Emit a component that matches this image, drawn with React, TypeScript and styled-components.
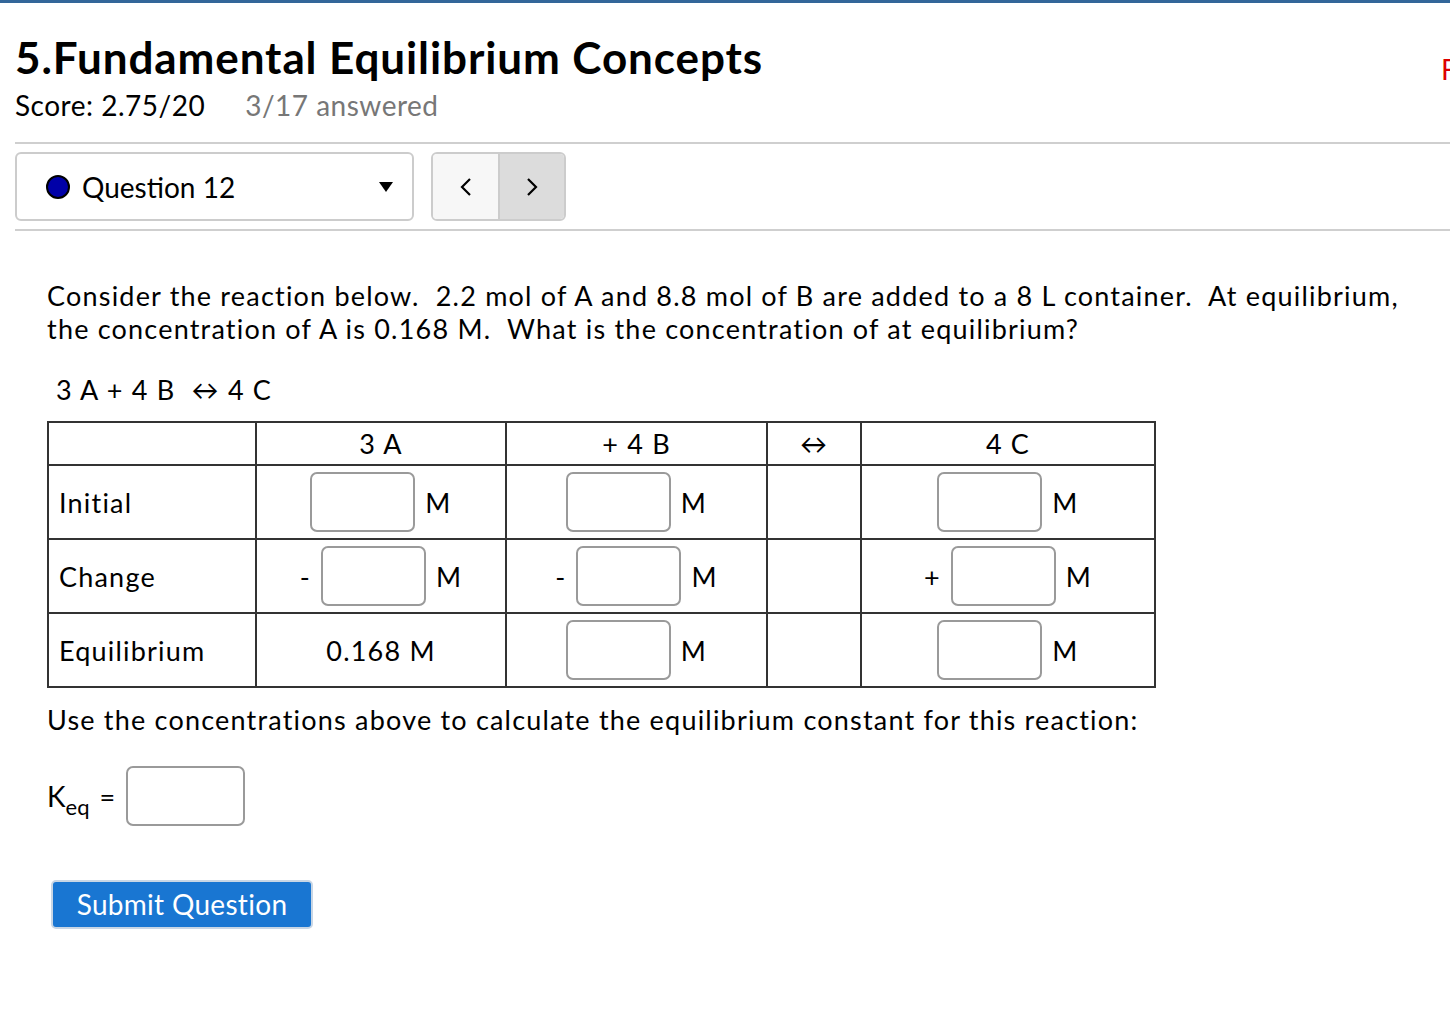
import styled, { createGlobalStyle } from 'styled-components'

const GlobalStyle = createGlobalStyle`
  html, body {
    margin: 0;
    padding: 0;
    background: #fff;
    overflow-x: hidden;
  }
  body {
    font-family: Lato, "Open Sans", "DejaVu Sans", sans-serif;
    color: #000;
  }
`

const Page = styled.div`
  border-top: 3px solid #336699;
  padding: 0 0 80px 15px;
`

const Header = styled.header`
  display: grid;
  grid-template-columns: 1426px max-content;
  padding-top: 28px;
`

const Title = styled.h1`
  margin: 0;
  font-size: 44px;
  font-weight: 700;
  line-height: 52px;
  letter-spacing: 0.9px;
`

const ScoreLine = styled.div`
  display: flex;
  gap: 40px;
  font-size: 28px;
  line-height: 36px;
  margin-top: 4px;
  letter-spacing: 0.5px;
`

const Muted = styled.span`
  color: #777;
`

const SideNote = styled.div`
  color: #dd0000;
  font-size: 28px;
  line-height: 36px;
  margin-top: 20px;
  white-space: nowrap;
`

const Rule = styled.hr<{ $top?: number }>`
  border: 0;
  border-top: 2px solid #cfcfcf;
  margin: ${p => p.$top ?? 0}px 0 0;
`

const NavBar = styled.div`
  display: flex;
  gap: 17px;
  padding: 8px 0 8px;
`

const Select = styled.div`
  width: 399px;
  height: 69px;
  box-sizing: border-box;
  border: 2px solid #cccccc;
  border-radius: 6px;
  display: flex;
  align-items: center;
  padding: 0 19px 0 29px;
  font-size: 28px;
`

const Dot = styled.span`
  width: 24px;
  height: 24px;
  box-sizing: border-box;
  border-radius: 50%;
  background: #0000a8;
  border: 2.5px solid #000;
  margin-right: 12px;
`

const SelectLabel = styled.span`
  flex: 1;
`

const Caret = styled.span`
  width: 0;
  height: 0;
  border-left: 7px solid transparent;
  border-right: 7px solid transparent;
  border-top: 10px solid #000;
`

const ButtonGroup = styled.div`
  display: flex;
  height: 69px;
  box-sizing: border-box;
  border: 2px solid #cccccc;
  border-radius: 6px;
  overflow: hidden;
`

const ArrowButton = styled.button<{ $active?: boolean }>`
  width: ${p => (p.$active ? '66px' : '65px')};
  border: 0;
  padding: 0;
  background: ${p => (p.$active ? '#dcdcdc' : '#f7f7f7')};
  display: flex;
  align-items: center;
  justify-content: center;
  & + & {
    border-left: 2px solid #cccccc;
  }
`

const Body = styled.div`
  padding: 48px 0 0 32px;
  font-size: 27px;
  line-height: 33px;
  letter-spacing: 1.2px;
`

const Prompt = styled.p`
  margin: 0;
  max-width: 1370px;
`

const Equation = styled.div`
  margin: 28px 0 15px 9px;
`

const Ice = styled.table`
  border-collapse: collapse;
  font-size: 27px;
`

const Th = styled.th<{ $w: number }>`
  width: ${p => p.$w}px;
  height: 41px;
  padding: 0;
  border: 2px solid #333;
  font-weight: 400;
  text-align: center;
`

const RowLabel = styled.td`
  height: 72px;
  padding: 0 0 0 10px;
  border: 2px solid #333;
  text-align: left;
`

const Cell = styled.td`
  padding: 0;
  border: 2px solid #333;
  text-align: center;
`

const CellInner = styled.span`
  display: inline-flex;
  align-items: center;
  gap: 10px;
`

const Box = styled.input<{ $w?: number }>`
  width: ${p => p.$w ?? 105}px;
  height: 60px;
  box-sizing: border-box;
  border: 2px solid #9a9a9a;
  border-radius: 7px;
  background: #fff;
  font: inherit;
  padding: 0 8px;
  outline: none;
`

const Instruction = styled.p`
  margin: 15px 0 0;
`

const KeqRow = styled.div`
  display: flex;
  align-items: center;
  margin-top: 30px;
  gap: 10px;
`

const Keq = styled.span`
  font-size: 28px;
  letter-spacing: 0;
  sub {
    font-size: 22px;
    vertical-align: -8px;
    line-height: 0;
  }
`

const Submit = styled.button`
  margin: 54px 0 0 4px;
  width: 262px;
  height: 49px;
  border: 2px solid #c8d6e5;
  border-radius: 5px;
  background: #1976d2;
  color: #fff;
  font: inherit;
  font-size: 28px;
  letter-spacing: 0.3px;
  padding: 0;
`

function Chevron({ dir }: { dir: 'left' | 'right' }) {
  return (
    <svg width="14" height="22" viewBox="0 0 14 22">
      <polyline
        points={dir === 'left' ? '11,3 3,11 11,19' : '3,3 11,11 3,19'}
        fill="none"
        stroke="#000"
        strokeWidth="2.2"
      />
    </svg>
  )
}

function Entry({ sign }: { sign?: string }) {
  return (
    <CellInner>
      {sign && <span>{sign}</span>}
      <Box type="text" />
      <span>M</span>
    </CellInner>
  )
}

export default function App() {
  return (
    <Page>
      <GlobalStyle />
      <Header>
        <div>
          <Title>5.Fundamental Equilibrium Concepts</Title>
          <ScoreLine>
            <span>Score: 2.75/20</span>
            <Muted>3/17 answered</Muted>
          </ScoreLine>
        </div>
        <SideNote>F</SideNote>
      </Header>

      <Rule $top={19} />
      <NavBar>
        <Select>
          <Dot />
          <SelectLabel>Question 12</SelectLabel>
          <Caret />
        </Select>
        <ButtonGroup>
          <ArrowButton aria-label="Previous question">
            <Chevron dir="left" />
          </ArrowButton>
          <ArrowButton $active aria-label="Next question">
            <Chevron dir="right" />
          </ArrowButton>
        </ButtonGroup>
      </NavBar>
      <Rule />

      <Body>
        <Prompt>
          Consider the reaction below.&nbsp; 2.2 mol of A and 8.8 mol of B are added to a 8 L
          container.&nbsp; At equilibrium, the concentration of A is 0.168 M.&nbsp; What is the
          concentration of at equilibrium?
        </Prompt>

        <Equation>3 A + 4 B &nbsp;↔ 4 C</Equation>

        <Ice>
          <thead>
            <tr>
              <Th $w={206} />
              <Th $w={248}>3 A</Th>
              <Th $w={259}>+ 4 B</Th>
              <Th $w={92}>↔</Th>
              <Th $w={292}>4 C</Th>
            </tr>
          </thead>
          <tbody>
            <tr>
              <RowLabel>Initial</RowLabel>
              <Cell><Entry /></Cell>
              <Cell><Entry /></Cell>
              <Cell />
              <Cell><Entry /></Cell>
            </tr>
            <tr>
              <RowLabel>Change</RowLabel>
              <Cell><Entry sign="-" /></Cell>
              <Cell><Entry sign="-" /></Cell>
              <Cell />
              <Cell><Entry sign="+" /></Cell>
            </tr>
            <tr>
              <RowLabel>Equilibrium</RowLabel>
              <Cell>0.168 M</Cell>
              <Cell><Entry /></Cell>
              <Cell />
              <Cell><Entry /></Cell>
            </tr>
          </tbody>
        </Ice>

        <Instruction>Use the concentrations above to calculate the equilibrium constant for this reaction:</Instruction>

        <KeqRow>
          <Keq>
            K<sub>eq</sub>
          </Keq>
          <span>=</span>
          <Box type="text" $w={119} />
        </KeqRow>

        <Submit type="button">Submit Question</Submit>
      </Body>
    </Page>
  )
}
